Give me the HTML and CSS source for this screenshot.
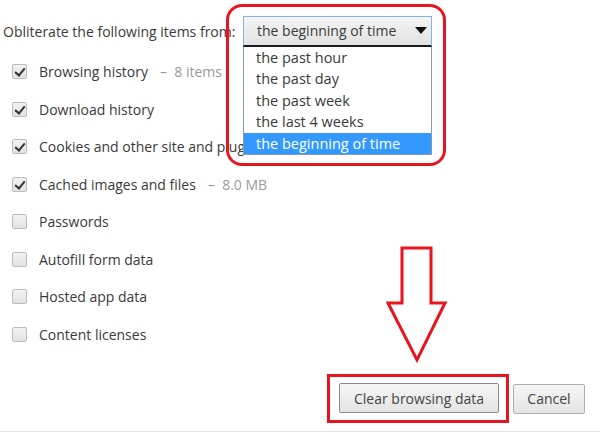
FILE: index.html
```html
<!DOCTYPE html>
<html lang="en">

<head>
    <meta charset="UTF-8">
    <title>Clear browsing data</title>
    <link rel="stylesheet" href="styles.css">
</head>

<body>
    <div class="dialog">
        <!-- Time range row -->
        <div class="range-row">
            <span class="range-label">Obliterate the following items from:</span>
            <div class="select-wrap">
                <div class="select-box">
                    <span>the beginning of time</span>
                    <span class="caret"></span>
                </div>
                <ul class="dropdown">
                    <li>the past hour</li>
                    <li>the past day</li>
                    <li>the past week</li>
                    <li>the last 4 weeks</li>
                    <li class="selected">the beginning of time</li>
                </ul>
            </div>
        </div>

        <!-- Checkbox list -->
        <ul class="items">
            <li><span class="check checked"></span>Browsing history<span class="extra">&ndash;&nbsp; 8 items</span></li>
            <li><span class="check checked"></span>Download history</li>
            <li><span class="check checked"></span>Cookies and other site and plugin data</li>
            <li><span class="check checked"></span>Cached images and files<span class="extra">&ndash;&nbsp; 8.0 MB</span></li>
            <li><span class="check"></span>Passwords</li>
            <li><span class="check"></span>Autofill form data</li>
            <li><span class="check"></span>Hosted app data</li>
            <li><span class="check"></span>Content licenses</li>
        </ul>

        <!-- Buttons -->
        <div class="footer">
            <div class="highlight">
                <button class="btn">Clear browsing data</button>
            </div>
            <button class="btn">Cancel</button>
        </div>

        <!-- Annotations -->
        <div class="mark-select"></div>
        <svg class="mark-arrow" width="62" height="118" viewBox="386 246 62 118">
            <polygon points="402,248 431,248 431,303 445,303 417,360 388,303 402,303"
                fill="#fff" stroke="#e8141e" stroke-width="3" stroke-linejoin="miter" />
        </svg>
    </div>
</body>

</html>
```

FILE: styles.css
```css
body {
    margin: 0;
    background: #fff;
    font-family: "Open Sans", "Noto Sans", sans-serif;
    font-size: 14px;
    color: #3a3a3a;
}

.dialog {
    position: relative;
    width: 600px;
    height: 431px;
    border-bottom: 1px solid #e4e4e4;
    overflow: hidden;
}

.range-row {
    display: flex;
    align-items: center;
    margin-top: 16px;
    padding-left: 3px;
    height: 30px;
}

.range-label {
    width: 240px;
    white-space: nowrap;
}

.select-wrap {
    position: relative;
    width: 189px;
}

.select-box {
    display: flex;
    align-items: center;
    justify-content: space-between;
    box-sizing: border-box;
    height: 31px;
    padding: 0 4px 0 13px;
    border: 1px solid #7eb4ea;
    border-bottom: 2px solid #1a1a1a;
    background: linear-gradient(#f4f4f4, #e3e3e3);
}

.caret {
    width: 0;
    height: 0;
    border-left: 6px solid transparent;
    border-right: 6px solid transparent;
    border-top: 7px solid #111;
}

.dropdown {
    position: absolute;
    top: 31px;
    left: 0;
    width: 189px;
    box-sizing: border-box;
    margin: 0;
    padding: 0;
    list-style: none;
    background: #fff;
    border: 1px solid #7f9db9;
    border-top: none;
}

.dropdown li {
    height: 21.5px;
    line-height: 21.5px;
    padding-left: 12px;
    font-size: 14.5px;
}

.dropdown li.selected {
    background: #3399ff;
    color: #fff;
}

.items {
    margin: 7px 0 0;
    padding: 0;
    list-style: none;
}

.items li {
    display: flex;
    align-items: center;
    height: 37.5px;
    padding-left: 12px;
    white-space: nowrap;
}

.check {
    position: relative;
    width: 13px;
    height: 13px;
    margin-right: 12px;
    border: 1px solid #bcbcbc;
    border-radius: 2px;
    background: linear-gradient(#f2f2f2, #e2e2e2);
}

.check.checked::after {
    content: "";
    position: absolute;
    left: 4px;
    top: 1px;
    width: 4px;
    height: 8px;
    border-right: 2.5px solid #333;
    border-bottom: 2.5px solid #333;
    transform: rotate(40deg);
}

.extra {
    color: #9a9a9a;
    margin-left: 12px;
}

.footer {
    display: flex;
    justify-content: flex-end;
    align-items: center;
    margin-top: 21px;
    padding-right: 15px;
}

.highlight {
    padding: 6px 7px 7px 9px;
    border: 3px solid #e8141e;
    margin-right: 4px;
}

.btn {
    height: 30px;
    padding: 0 13px;
    font-family: inherit;
    font-size: 14px;
    color: #444;
    border: 1px solid #adadad;
    border-radius: 2px;
    background: linear-gradient(#f6f6f6, #e4e4e4);
}

.highlight .btn {
    width: 160px;
    border-color: #8a8a8a;
}

.footer > .btn {
    width: 72px;
}

.mark-select {
    position: absolute;
    left: 226px;
    top: 4px;
    width: 214px;
    height: 156px;
    border: 3px solid #e8141e;
    border-radius: 16px;
}

.mark-arrow {
    position: absolute;
    left: 386px;
    top: 246px;
}
```
